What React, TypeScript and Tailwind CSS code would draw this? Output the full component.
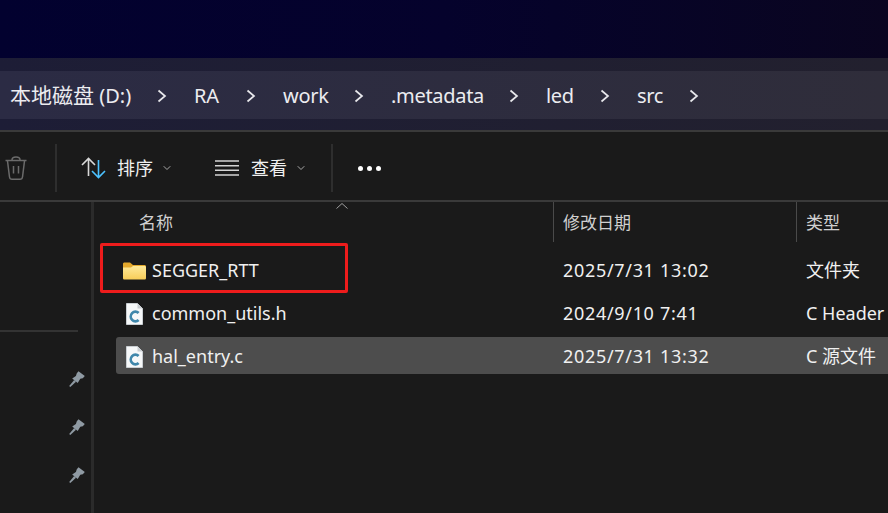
import { ChevronDown } from "lucide-react";

const crumbs = [
  { label: "RA", w: "w-[26px]" },
  { label: "work", w: "w-[45px]" },
  { label: ".metadata", w: "w-[92px]" },
  { label: "led", w: "w-[28px]" },
  { label: "src", w: "w-[26px]" },
];

const font = "font-['Noto_Sans','Noto_Sans_CJK_SC',sans-serif]";

function CrumbArrow() {
  return (
    <svg width="10" height="14" viewBox="0 0 10 14" className="ml-[26px] mr-[27px] shrink-0 text-[#e8e8ec]">
      <path d="M1.5 1.5 L8 7 L1.5 12.5" fill="none" stroke="currentColor" strokeWidth="1.7" />
    </svg>
  );
}

function TrashIcon() {
  return (
    <svg width="24" height="26" viewBox="0 0 24 26" fill="none" stroke="#6b6b6b" strokeWidth="1.5">
      <path d="M1.5 5.5 H22.5" />
      <path d="M8 5 C8 1 16 1 16 5" />
      <path d="M3.5 6 L5.5 22 C5.7 23.5 6.5 24.2 8 24.2 H16 C17.5 24.2 18.3 23.5 18.5 22 L20.5 6" />
      <path d="M9.5 11 V18.5 M14.5 11 V18.5" />
    </svg>
  );
}

function SortIcon() {
  return (
    <svg width="25" height="22" viewBox="0 0 25 22" fill="none" strokeWidth="1.6">
      <path d="M1 8 L7.5 1.5 L14 8 M7.5 2 V19" stroke="#d8d8d8" />
      <path d="M11 14 L17.5 20.5 L24 14 M17.5 3 V20" stroke="#4cc2ff" />
    </svg>
  );
}

function LinesIcon() {
  return (
    <svg width="24" height="16" viewBox="0 0 24 16" fill="none" stroke="#d4d4d4" strokeWidth="1.4">
      <path d="M0 1 H24 M0 5.7 H24 M0 10.3 H24 M0 15 H24" />
    </svg>
  );
}

function FolderIcon() {
  return (
    <svg width="23" height="18" viewBox="0 0 23 18">
      <defs>
        <linearGradient id="folderBody" x1="0" y1="0" x2="0" y2="1">
          <stop offset="0" stopColor="#fee999" />
          <stop offset="1" stopColor="#f8cd58" />
        </linearGradient>
      </defs>
      <path d="M0 2 C0 1 .6 .5 1.5 .5 H7 L10 3 H21.5 C22.4 3 23 3.6 23 4.5 V6 H0 Z" fill="#e5a92c" />
      <path d="M0 5.5 L8 5.5 L10 4 H21.5 C22.4 4 23 4.6 23 5.4 V16 C23 17 22.4 17.5 21.5 17.5 H1.5 C.6 17.5 0 17 0 16 Z" fill="url(#folderBody)" />
    </svg>
  );
}

function CFileIcon() {
  return (
    <svg width="17" height="22" viewBox="0 0 17 22">
      <path d="M.5 .5 H11.5 L16.5 5.5 V21.5 H.5 Z" fill="#f6f8f9" stroke="#c9ced2" />
      <path d="M11.5 .5 V5.5 H16.5 Z" fill="#c9ced2" />
      <path d="M12.6 10 A4.6 4.9 0 1 0 12.6 17" fill="none" stroke="#3f87ab" strokeWidth="2.7" />
    </svg>
  );
}

function PinIcon() {
  return (
    <svg width="16" height="16" viewBox="0 0 16 16" fill="#8f9aa3">
      <path d="M9.5 .3 L15.8 5 L13.8 7.2 L11.3 7.8 L8.7 12 L3.2 7.6 L6.9 5 L7.8 2.3 Z" />
      <path d="M5.2 9 L7 10.8 L1.3 16 L.2 15 Z" />
    </svg>
  );
}

function FileRow({
  name,
  date,
  type,
  icon,
  selected,
}: {
  name: string;
  date: string;
  type: string;
  icon: React.ReactNode;
  selected?: boolean;
}) {
  return (
    <div
      className={`flex h-[37px] items-center rounded-l-[3px] pt-[2px] text-[18px] text-[#f0f0f0] ${
        selected ? "bg-[#4d4d4d]" : ""
      }`}
    >
      <div className="flex w-[36px] shrink-0 justify-center">{icon}</div>
      <div className="w-[411px] shrink-0 truncate">{name}</div>
      <div className="w-[243px] shrink-0 whitespace-nowrap tracking-[0.68px]">{date}</div>
      <div className="whitespace-nowrap">{type}</div>
    </div>
  );
}

export default function App() {
  return (
    <div className={`flex h-[513px] w-[888px] flex-col overflow-hidden bg-[#1a1a1a] ${font}`}>
      <div className="h-[58px] shrink-0 bg-gradient-to-r from-[#02012f] via-[#05022c] to-[#0a0520]" />

      {/* address bar */}
      <div className="h-[72px] shrink-0 bg-gradient-to-r from-[#1d1d36] to-[#22202e] pt-[13px]">
        <div className="flex h-[48px] items-center bg-gradient-to-r from-[#2b2b44] to-[#2f2d3a] pl-[10px] pt-[2px] text-[20px] text-[#ececf0]">
          <span className="w-[121px] whitespace-nowrap">
            <span className="text-[21px]">本地磁盘</span> (D:)
          </span>
          <CrumbArrow />
          {crumbs.map((c, i) => (
            <div key={c.label} className="flex items-center">
              <span className={`whitespace-nowrap tracking-[-0.3px] ${c.w}`}>{c.label}</span>
              <CrumbArrow />
            </div>
          ))}
        </div>
      </div>

      {/* toolbar */}
      <div className="flex h-[72px] shrink-0 items-center border-y-2 border-[#3a3a3a] pl-[4px] pt-[4px] text-[18px] text-[#f0f0f0]">
        <TrashIcon />
        <div className="ml-[27px] h-[48px] w-[2px] bg-[#2e2e2e]" />
        <div className="ml-[24px] flex items-center">
          <SortIcon />
          <span className="ml-[11px]">排序</span>
          <ChevronDown size={12} className="ml-[8px] text-[#a8a8a8]" />
        </div>
        <div className="ml-[42px] flex items-center">
          <LinesIcon />
          <span className="ml-[12px]">查看</span>
          <ChevronDown size={12} className="ml-[8px] text-[#a8a8a8]" />
        </div>
        <div className="ml-[24px] h-[48px] w-[2px] bg-[#2e2e2e]" />
        <div className="ml-[25px] flex gap-[4px]">
          <span className="size-[5px] rounded-full bg-white" />
          <span className="size-[5px] rounded-full bg-white" />
          <span className="size-[5px] rounded-full bg-white" />
        </div>
      </div>

      <div className="flex min-h-0 flex-1">
        {/* nav pane */}
        <div className="w-[91px] shrink-0">
          <div className="mt-[128px] h-[2px] w-[78px] bg-[#333333]" />
          <div className="mt-[39px] flex flex-col items-end gap-[32px] pr-[6px]">
            <PinIcon />
            <PinIcon />
            <PinIcon />
          </div>
        </div>
        <div className="w-[3px] shrink-0 bg-[#2b2b2b]" />

        {/* file list */}
        <div className="relative min-w-0 flex-1">
          <div className="flex h-[40px] items-stretch text-[17px] text-[#d0d0d0]">
            <div className="relative flex w-[459px] shrink-0 items-center pl-[45px] pt-[2px]">
              名称
              <svg width="12" height="6" viewBox="0 0 12 6" className="absolute left-[242px] top-[1px]" fill="none" stroke="#a0a0a0" strokeWidth="1">
                <path d="M.5 5.5 L6 .5 L11.5 5.5" />
              </svg>
            </div>
            <div className="flex w-[243px] shrink-0 items-center border-l border-[#4a4a4a] pl-[9px] pt-[2px]">修改日期</div>
            <div className="flex flex-1 items-center border-l border-[#4a4a4a] pl-[9px] pt-[2px]">类型</div>
          </div>

          <div className="ml-[22px] mt-[9px] flex flex-col gap-[6px]">
            <FileRow name="SEGGER_RTT" date="2025/7/31 13:02" type="文件夹" icon={<FolderIcon />} />
            <FileRow name="common_utils.h" date="2024/9/10 7:41" type="C Header" icon={<CFileIcon />} />
            <FileRow name="hal_entry.c" date="2025/7/31 13:32" type="C 源文件" icon={<CFileIcon />} selected />
          </div>

          {/* annotation drawn on the screenshot */}
          <div className="absolute left-[6px] top-[41px] h-[50px] w-[248px] rounded-[2px] border-[3px] border-[#ee1c1c]" />
        </div>
      </div>
    </div>
  );
}
